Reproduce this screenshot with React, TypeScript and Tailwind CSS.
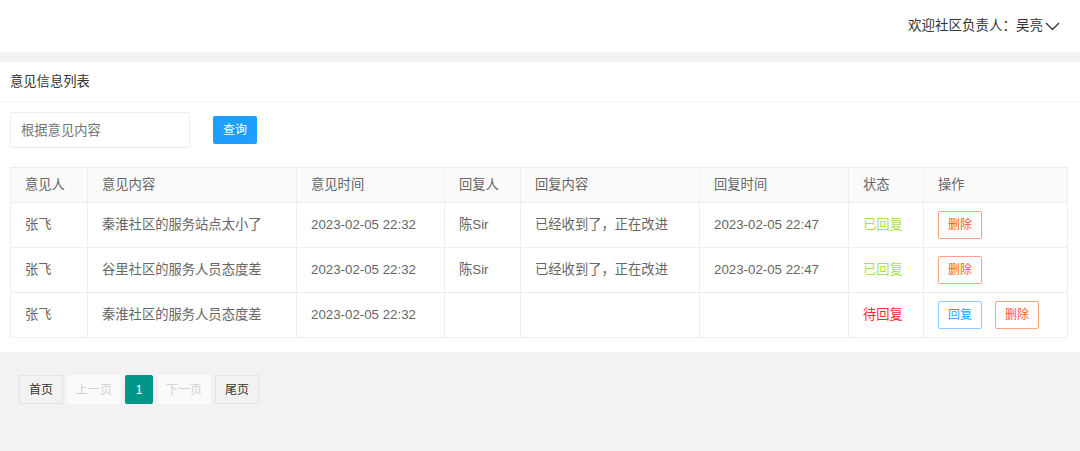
const font = { fontFamily: '"Liberation Sans", "Noto Sans CJK SC", sans-serif' };

const rows = [
    { who: "张飞", content: "秦淮社区的服务站点太小了", time: "2023-02-05 22:32", replier: "陈Sir", reply: "已经收到了，正在改进", rtime: "2023-02-05 22:47", done: true },
    { who: "张飞", content: "谷里社区的服务人员态度差", time: "2023-02-05 22:32", replier: "陈Sir", reply: "已经收到了，正在改进", rtime: "2023-02-05 22:47", done: true },
    { who: "张飞", content: "秦淮社区的服务人员态度差", time: "2023-02-05 22:32", replier: "", reply: "", rtime: "", done: false },
];

const cols = ["意见人", "意见内容", "意见时间", "回复人", "回复内容", "回复时间", "状态", "操作"];
const widths = ["w-[77px]", "w-[209px]", "w-[148px]", "w-[76px]", "w-[179px]", "w-[149px]", "w-[75px]", "w-[144px]"];

export default function App() {
    return (
        <div className="w-[1080px] h-[451px] bg-[#f2f2f2] text-[#666] text-[13.3px]" style={font}>
            {/* Header */}
            <div className="h-[52px] bg-white flex items-center justify-end pr-[20px]">
                <span className="text-[#333] text-[13.5px]">欢迎社区负责人：吴亮</span>
                <svg width="15" height="9" viewBox="0 0 15 9" className="ml-[2px] mt-[1px]">
                    <polyline points="1,1 7.5,7.5 14,1" fill="none" stroke="#333" strokeWidth="1.3" />
                </svg>
            </div>

            {/* Panel */}
            <div className="mt-[10px] bg-white">
                <div className="h-[40px] border-b border-[#f6f6f6] flex items-center px-[10px] text-[#333]">意见信息列表</div>
                <div className="px-[10px] pt-[10px] pb-[14px]">
                    <div className="flex items-center">
                        <input
                            className="w-[180px] h-[36px] border border-[#eee] rounded-[2px] px-[10px] text-[13.3px] outline-none placeholder:text-[#757575]"
                            placeholder="根据意见内容"
                        />
                        <button className="ml-[23px] w-[44px] h-[28px] bg-[#1e9fff] text-white text-[12px] rounded-[2px]">查询</button>
                    </div>

                    <table className="mt-[19px] w-[1057px] border-collapse table-fixed">
                        <thead>
                            <tr className="bg-[#fafafa] h-[35px]">
                                {cols.map((c, i) => (
                                    <th key={c} className={`${widths[i]} border border-[#eee] font-normal text-left px-[14px] text-[#666]`}>{c}</th>
                                ))}
                            </tr>
                        </thead>
                        <tbody>
                            {rows.map((r, i) => (
                                <tr key={i} className="h-[45px]">
                                    <td className="border border-[#eee] px-[14px]">{r.who}</td>
                                    <td className="border border-[#eee] px-[14px]">{r.content}</td>
                                    <td className="border border-[#eee] px-[14px]">{r.time}</td>
                                    <td className="border border-[#eee] px-[14px]">{r.replier}</td>
                                    <td className="border border-[#eee] px-[14px]">{r.reply}</td>
                                    <td className="border border-[#eee] px-[14px]">{r.rtime}</td>
                                    <td className="border border-[#eee] px-[14px]">
                                        {r.done ? (
                                            <span className="text-[#a9e34b]">已回复</span>
                                        ) : (
                                            <span className="text-[#ff2a2a]">待回复</span>
                                        )}
                                    </td>
                                    <td className="border border-[#eee] px-[14px]">
                                        <div className="flex items-center gap-[13px]">
                                            {!r.done && (
                                                <button className="w-[44px] h-[28px] border border-[#8ec9ff] text-[#1e9fff] text-[12px] rounded-[2px] bg-white">回复</button>
                                            )}
                                            <button className="w-[44px] h-[28px] border border-[#ffa283] text-[#ff5722] text-[12px] rounded-[2px] bg-white">删除</button>
                                        </div>
                                    </td>
                                </tr>
                            ))}
                        </tbody>
                    </table>
                </div>
            </div>

            {/* Pagination */}
            <div className="pt-[23px] pl-[19px] flex items-center gap-[4px] text-[12px]">
                <button className="h-[29px] w-[44px] border border-[#e2e2e2] text-[#333]">首页</button>
                <button className="h-[29px] w-[54px] bg-[#fafafa] text-[#d2d2d2]">上一页</button>
                <button className="h-[29px] w-[28px] bg-[#009688] text-white rounded-[2px]">1</button>
                <button className="h-[29px] w-[54px] bg-[#fafafa] text-[#d2d2d2]">下一页</button>
                <button className="h-[29px] w-[44px] border border-[#e2e2e2] text-[#333]">尾页</button>
            </div>
        </div>
    );
}
